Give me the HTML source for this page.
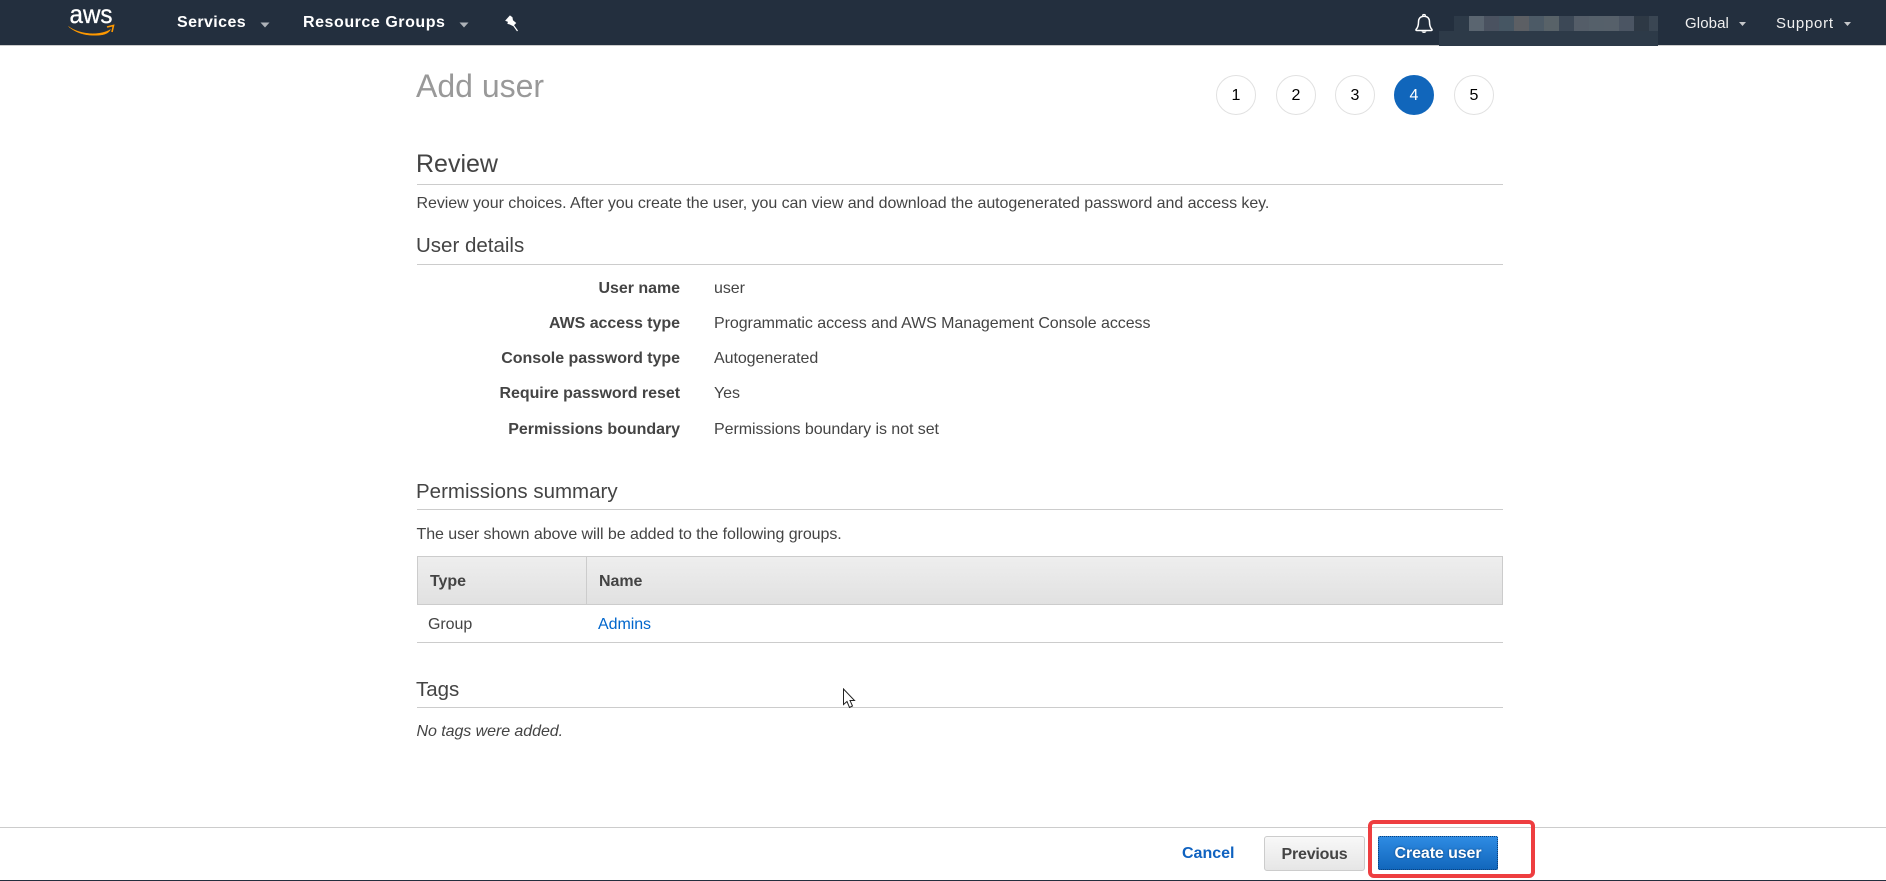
<!DOCTYPE html>
<html><head><meta charset="utf-8"><title>Add user</title>
<style>
html,body{margin:0;padding:0;background:#fff;}
body{position:relative;width:1886px;height:881px;overflow:hidden;font-family:"Liberation Sans",Arial,sans-serif;color:#444;}
.t{position:absolute;white-space:nowrap;line-height:20px;font-size:16px;letter-spacing:-.06px;}
.h{font-size:20.500px;line-height:24px;color:#444;letter-spacing:0;}
.b{font-weight:bold;right:1206px;color:#444;letter-spacing:-.04px;}
.v{left:714px;}
.line{position:absolute;left:417px;width:1086px;height:1px;background:#ccc;}
.c{position:absolute;top:75px;width:38px;height:38px;border:1px solid #e1e1e1;border-radius:50%;text-align:center;line-height:39px;font-size:16px;color:#000;background:#fff;}
.nav{position:absolute;left:0;top:0;width:1886px;height:45px;background:#232f3e;border-bottom:1px solid #ccc;}
.n{position:absolute;white-space:nowrap;font-size:16px;line-height:20px;color:#fff;}
.bl{position:absolute;top:16px;height:15px;}
</style></head><body>
<div class="nav"></div>
<svg style="position:absolute;left:60px;top:0" width="64" height="40" viewBox="60 0 64 40">
<text x="69.5" y="23" font-family="Liberation Sans" font-size="26" fill="#fff" stroke="#fff" stroke-width=".3" textLength="43" lengthAdjust="spacingAndGlyphs">aws</text>
<path d="M68.5 26.5C80 35 100 36 110.500 29.500C108 35 100 35.500 92 35.200C83 35 75 32 68.500 26.500Z" fill="#f90" stroke="#f90" stroke-width=".5"/>
<path d="M107 27L113.500 25.500L112 32" fill="none" stroke="#f90" stroke-width="1.600"/>
</svg>
<div class="n" style="left:177px;top:13px;font-weight:bold;letter-spacing:.4px">Services</div>
<svg style="position:absolute;left:259px;top:21px" width="12" height="8"><path d="M1.500 1.500H10.500L6 6.500Z" fill="#aeb3b9"/></svg>
<div class="n" style="left:303px;top:13px;font-weight:bold;letter-spacing:.55px">Resource Groups</div>
<svg style="position:absolute;left:458px;top:21px" width="12" height="8"><path d="M1.500 1.500H10.500L6 6.500Z" fill="#aeb3b9"/></svg>
<svg style="position:absolute;left:504px;top:14px" width="16" height="18" viewBox="0 0 16 18"><path d="M2 6.500L6 2L8 3.500L8.500 6.500L11.500 9L9 11.500L6 10L4 9.500L4.500 7.500Z" fill="#fff" stroke="#fff" stroke-width="1"/><path d="M8.500 10L13.500 17" stroke="#fff" stroke-width="1.200"/></svg>
<svg style="position:absolute;left:1414px;top:13px" width="20" height="22" viewBox="0 0 20 22"><path d="M2 16.500C4 14.500 4.500 12 4.500 9C4.500 5.500 6.500 3.200 10 3.200C13.500 3.200 15.500 5.500 15.500 9C15.500 12 16 14.500 18 16.500C18.300 17.200 18 17.500 17 17.500H3C2 17.500 1.700 17.200 2 16.500Z" fill="none" stroke="#fff" stroke-width="1.500"/><path d="M8.500 2.800C8.500 1 11.500 1 11.500 2.800" fill="none" stroke="#fff" stroke-width="1.200"/><path d="M7.500 18.500C8.500 20.500 11.500 20.500 12.500 18.500Z" fill="#fff"/></svg>
<div class="bl" style="left:1454px;width:15px;background:#2d3a48"></div>
<div class="bl" style="left:1469px;width:15px;background:#5a6570"></div>
<div class="bl" style="left:1484px;width:15px;background:#4a5260"></div>
<div class="bl" style="left:1499px;width:15px;background:#465663"></div>
<div class="bl" style="left:1514px;width:15px;background:#5c5f64"></div>
<div class="bl" style="left:1529px;width:15px;background:#4c5a66"></div>
<div class="bl" style="left:1544px;width:15px;background:#586268"></div>
<div class="bl" style="left:1559px;width:15px;background:#3c4856"></div>
<div class="bl" style="left:1574px;width:15px;background:#545d68"></div>
<div class="bl" style="left:1589px;width:15px;background:#55606a"></div>
<div class="bl" style="left:1604px;width:15px;background:#56606a"></div>
<div class="bl" style="left:1619px;width:15px;background:#4b5563"></div>
<div class="bl" style="left:1634px;width:15px;background:#2e3945"></div>
<div class="bl" style="left:1649px;width:9px;background:#3a4653"></div>
<div style="position:absolute;left:1439px;top:31px;width:219px;height:15px;background:#2d3a48"></div>
<div class="n" style="left:1685px;top:14px;font-size:15px;color:#f0f0f0;letter-spacing:.1px">Global</div>
<svg style="position:absolute;left:1738px;top:21px" width="10" height="6"><path d="M1 1H8L4.500 5Z" fill="#c5c7ca"/></svg>
<div class="n" style="left:1776px;top:14px;font-size:15px;color:#f0f0f0;letter-spacing:.75px">Support</div>
<svg style="position:absolute;left:1843px;top:21px" width="10" height="6"><path d="M1 1H8L4.500 5Z" fill="#c5c7ca"/></svg>

<div class="t" style="left:416px;top:66px;font-size:32px;line-height:40px;color:#999;letter-spacing:0">Add user</div>
<div class="c" style="left:1216px">1</div>
<div class="c" style="left:1276px">2</div>
<div class="c" style="left:1335px">3</div>
<div class="c" style="left:1394px;background:#1166bb;border-color:#1166bb;color:#fff">4</div>
<div class="c" style="left:1454px">5</div>

<div class="t" style="left:416px;top:149px;font-size:25px;line-height:30px;color:#444;letter-spacing:0">Review</div>
<div class="line" style="top:184px"></div>
<div class="t" style="left:416.500px;top:194px">Review your choices. After you create the user, you can view and download the autogenerated password and access key.</div>
<div class="t h" style="left:416px;top:233.500px">User details</div>
<div class="line" style="top:264px"></div>
<div class="t b" style="top:279px">User name</div><div class="t v" style="top:279px">user</div>
<div class="t b" style="top:314px">AWS access type</div><div class="t v" style="top:314px">Programmatic access and AWS Management Console access</div>
<div class="t b" style="top:349px">Console password type</div><div class="t v" style="top:349px">Autogenerated</div>
<div class="t b" style="top:384px">Require password reset</div><div class="t v" style="top:384px">Yes</div>
<div class="t b" style="top:420px">Permissions boundary</div><div class="t v" style="top:420px">Permissions boundary is not set</div>

<div class="t h" style="left:416px;top:480px">Permissions summary</div>
<div class="line" style="top:509px"></div>
<div class="t" style="left:416.500px;top:525px">The user shown above will be added to the following groups.</div>
<div style="position:absolute;left:417px;top:556px;width:1084px;height:47px;border:1px solid #ccc;background:linear-gradient(#eeeeee,#e1e1e1)"></div>
<div style="position:absolute;left:586px;top:557px;width:1px;height:47px;background:#ccc"></div>
<div class="t" style="left:430px;top:571.500px;font-weight:bold">Type</div>
<div class="t" style="left:599px;top:571.500px;font-weight:bold">Name</div>
<div class="t" style="left:428px;top:615px">Group</div>
<div class="t" style="left:598px;top:615px;color:#0066cc">Admins</div>
<div class="line" style="top:642px"></div>

<div class="t h" style="left:416px;top:678px">Tags</div>
<div class="line" style="top:707px"></div>
<div class="t" style="left:416.500px;top:722px;font-style:italic">No tags were added.</div>

<svg style="position:absolute;left:842px;top:688px" width="14" height="21" viewBox="0 0 14 21"><path d="M1.500 1V16.500L5 13.500L7.500 19.500L10.500 18L8 12.500H12.500Z" fill="#fff" stroke="#222" stroke-width="1"/></svg>

<div style="position:absolute;left:0;top:827px;width:1886px;height:1px;background:#ccc"></div>
<div style="position:absolute;left:0;top:880px;width:1886px;height:1px;background:#232f3e"></div>
<div class="t" style="left:1182px;top:844px;font-weight:bold;color:#0f62c0;letter-spacing:0">Cancel</div>
<div style="position:absolute;left:1264px;top:836px;width:99px;height:33px;border:1px solid #ccc;border-radius:3px;background:linear-gradient(#f8f8f8,#e6e6e6);text-align:center;line-height:35px;font-size:16px;font-weight:bold;color:#444;letter-spacing:-.2px">Previous</div>
<div style="position:absolute;left:1378px;top:836px;width:120px;height:34px;border-radius:2px;background:linear-gradient(#2f8ce4,#1166bb);text-align:center;line-height:36px;font-size:16px;font-weight:bold;color:#fff;outline:1px dotted #0a3f7a;outline-offset:-1px;text-shadow:0 0 2px #0a3f7a;letter-spacing:-.1px">Create user</div>
<div style="position:absolute;left:1368px;top:820px;width:159px;height:50px;border:4px solid #ee3e40;border-radius:6px"></div>
</body></html>
